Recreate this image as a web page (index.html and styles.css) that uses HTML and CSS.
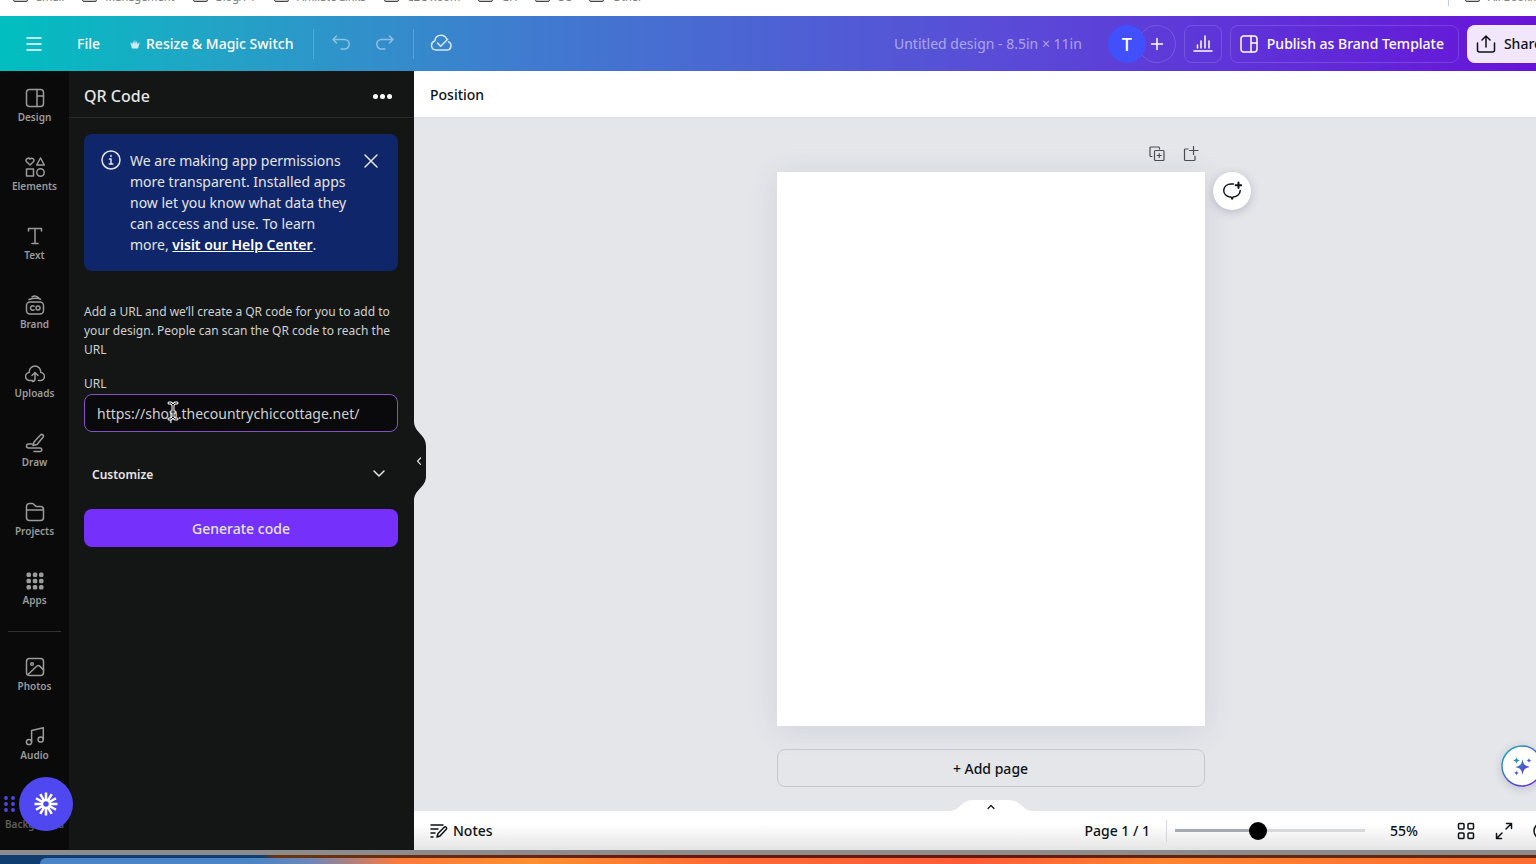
FILE: index.html
```html
<!DOCTYPE html>
<html lang="en">
<head>
  <meta charset="UTF-8" />
  <meta name="viewport" content="width=device-width, initial-scale=1.0"/>
  <title>Untitled design</title>
  <link rel="stylesheet" href="styles.css">
</head>
<body>
  <nav class="bookmarks">
    <a href="#"><i></i>Email</a>
    <a href="#"><i></i>Management</a>
    <a href="#"><i></i>Blog/PT</a>
    <a href="#"><i></i>Affiliate Links</a>
    <a href="#"><i></i>C2C Room</a>
    <a href="#"><i></i>GH</a>
    <a href="#"><i></i>SC</a>
    <a href="#"><i></i>Other</a>
    <a href="#" class="all-bookmarks"><i></i>All Bookmarks</a>
  </nav>

  <div class="app">
    <header class="topbar">
      <button class="icon-btn menu" aria-label="Menu">
        <svg width="16" height="16" viewBox="0 0 16 16"><path d="M1 2h14M1 8h14M1 14h14"/></svg>
      </button>
      <button class="text-btn">File</button>
      <button class="text-btn resize">
        <svg class="crown" width="10" height="10" viewBox="0 0 10 10"><path d="M2 9.500 .2 3.200 2.600 5 3 1.800 4.200 4.600 5 .5l.8 4.100L7 1.800 7.400 5l2.400-1.800L8 9.500z"/></svg>
        Resize &amp; Magic Switch
      </button>
      <span class="bar-line"></span>
      <div class="history">
        <button class="icon-btn dim" aria-label="Undo">
          <svg width="20" height="20" viewBox="0 0 20 20"><path d="M5.500 2 2 5.500 5.500 9M2 5.500h11.500a4.700 4.700 0 0 1 0 9.500H10"/></svg>
        </button>
        <button class="icon-btn dim" aria-label="Redo">
          <svg width="20" height="20" viewBox="0 0 20 20"><path d="M14.500 2 18 5.500 14.500 9M18 5.500H6.500a4.700 4.700 0 0 0 0 9.500H10"/></svg>
        </button>
      </div>
      <span class="bar-line"></span>
      <button class="icon-btn saved" aria-label="All changes saved">
        <svg width="22" height="20" viewBox="0 0 22 20"><path d="M6 16a4.600 4.600 0 0 1-1.200-9C5.300 3.500 8 1.300 11.100 1.300c2.400 0 4.500 1.300 5.500 3.400M6 16h10.500a4.300 4.300 0 0 0 2-8.200M7.500 9l3.200 3.200 7-7"/></svg>
      </button>

      <div class="topbar-right">
        <span class="doc-title">Untitled design - 8.5in × 11in</span>
        <div class="people">
          <span class="avatar">T</span>
          <button class="add-person" aria-label="Add people">
            <svg width="14" height="14" viewBox="0 0 14 14"><path d="M7 1.500v11M1.500 7h11"/></svg>
          </button>
        </div>
        <button class="outline-btn square" aria-label="Insights">
          <svg width="20" height="20" viewBox="0 0 20 20"><path d="M1 17h18M4.500 14v-3M8 14V7M12 14V2M16 14V7"/></svg>
        </button>
        <button class="outline-btn">
          <svg width="20" height="20" viewBox="0 0 20 20"><rect x="2" y="2" width="16" height="16" rx="3"/><path d="M12 2v16M12 9h6"/></svg>
          Publish as Brand Template
        </button>
        <button class="share-btn">
          <svg width="20" height="20" viewBox="0 0 20 20"><path d="M10 13V2M6 6l4-4 4 4M1.500 9v7a2 2 0 0 0 2 2h13a2 2 0 0 0 2-2V9"/></svg>
          Share
        </button>
      </div>
    </header>

    <div class="workspace">
      <nav class="rail">
        <a href="#"><svg viewBox="0 0 20 20"><rect x="1.500" y="1.500" width="17" height="17" rx="3"/><path d="M12 1.500v17M12 8h6.500"/></svg>Design</a>
        <a href="#"><svg viewBox="0 0 20 20"><path d="M5 8 1.400 4.500A2.100 2.100 0 0 1 5 2.200a2.100 2.100 0 0 1 3.600 2.300zM15.500 1l3.800 7h-7.600z"/><rect x="1.500" y="12" width="7" height="7"/><circle cx="15.500" cy="15.500" r="3.700"/></svg>Elements</a>
        <a href="#"><svg viewBox="0 0 20 20"><path d="M3.500 5V2.500h13V5M10 2.500v15M7 17.500h6"/></svg>Text</a>
        <a href="#"><svg viewBox="0 0 20 20"><rect x="1.500" y="7" width="17" height="12" rx="3.500"/><path d="M4 4.500c3-1 8-2 11.500-.4M7 1.800c2.500-1.300 5-1 7 1.500M9 11.200a2.200 2.200 0 1 0 0 3.600"/><circle cx="13" cy="13" r="2"/></svg>Brand</a>
        <a href="#"><svg viewBox="0 0 20 20"><path d="M7.500 16.500H5a4 4 0 0 1-.8-8C4 4.500 7 2 10 2s6 2.500 5.800 6.500a4 4 0 0 1-.8 8h-1.500M7 11.500l3-3 3 3M10 9v5.500c0 2-1 3-2.500 3"/></svg>Uploads</a>
        <a href="#"><svg viewBox="0 0 20 20"><path d="m9 9 6.500-7a1.600 1.600 0 0 1 2.500 2.200L12 11.500 8 12.500zM7 11H3.500a2 2 0 0 0 0 4H15a1.800 1.800 0 0 1 0 3.600H9"/></svg>Draw</a>
        <a href="#"><svg viewBox="0 0 20 20"><path d="M1.500 15.500v-11a3 3 0 0 1 3-3h2.700c2.200 0 2.300 3 4.300 3h4a3 3 0 0 1 3 3v8a3 3 0 0 1-3 3h-11a3 3 0 0 1-3-3M1.500 8h17"/></svg>Projects</a>
        <a href="#"><svg class="solid" viewBox="0 0 20 20"><rect x="1.500" y="1.500" width="4.500" height="4.500" rx="1.500"/><rect x="7.800" y="1.500" width="4.500" height="4.500" rx="1.500"/><rect x="14" y="1.500" width="4.500" height="4.500" rx="1.500"/><rect x="1.500" y="7.800" width="4.500" height="4.500" rx="1.500"/><rect x="7.800" y="7.800" width="4.500" height="4.500" rx="1.500"/><rect x="14" y="7.800" width="4.500" height="4.500" rx="1.500"/><rect x="1.500" y="14" width="4.500" height="4.500" rx="1.500"/><rect x="7.800" y="14" width="4.500" height="4.500" rx="1.500"/><rect x="14" y="14" width="4.500" height="4.500" rx="1.500"/></svg>Apps</a>
        <hr>
        <a href="#"><svg viewBox="0 0 20 20"><rect x="1.500" y="1.500" width="17" height="17" rx="3"/><circle cx="7" cy="7" r="1.300"/><path d="m3 17.500 9-8.500c1-1 2-.6 3 .4l3.500 3.500"/></svg>Photos</a>
        <a href="#"><svg viewBox="0 0 20 20"><circle cx="4" cy="16" r="2.600"/><circle cx="15.700" cy="13.500" r="2.600"/><path d="M6.600 16V4.500l11.700-2.800v11.800"/></svg>Audio</a>
        <a href="#" class="faded"><svg viewBox="0 0 20 20"></svg>Background</a>
      </nav>

      <section class="panel">
        <div class="panel-header">
          <h1>QR Code</h1>
          <button class="more" aria-label="More options"><i></i><i></i><i></i></button>
        </div>
        <div class="panel-body">
          <div class="notice">
            <svg width="20" height="20" viewBox="0 0 20 20"><circle cx="10" cy="10" r="9"/><path d="M8.500 9H10v5M8.300 14h3.500M10 5.500v1"/></svg>
            <p>We are making app permissions more transparent. Installed apps now let you know what data they can access and use. To learn more, <a href="#">visit our Help Center</a>.</p>
            <button class="close" aria-label="Close">
              <svg width="14" height="14" viewBox="0 0 14 14"><path d="m1 1 12 12M13 1 1 13"/></svg>
            </button>
          </div>
          <p class="intro">Add a URL and we’ll create a QR code for you to add to your design. People can scan the QR code to reach the URL</p>
          <label for="url">URL</label>
          <input type="text" id="url" value="https://shop.thecountrychiccottage.net/">
          <button class="customize">
            Customize
            <svg width="12" height="8" viewBox="0 0 12 8"><path d="m1 1 5 5 5-5"/></svg>
          </button>
          <button class="generate">Generate code</button>
          <svg class="cursor" width="12" height="20" viewBox="0 0 12 20"><path class="halo" d="M2 2h2l2 2 2-2h2M6 4v12M2 18h2l2-2 2 2h2M4 11h4"/><path d="M2 2h2l2 2 2-2h2M6 4v12M2 18h2l2-2 2 2h2M4 11h4"/></svg>
        </div>
        <button class="collapse" aria-label="Hide panel">
          <svg width="13" height="80" viewBox="0 0 13 80"><path class="shape" d="M0 0C0 12 12 13 12 25v30C12 67 0 68 0 80z"/><path d="m6.500 37-3 3.200 3 3.200"/></svg>
        </button>
      </section>

      <main class="editor">
        <div class="toolbar"><button>Position</button></div>
        <div class="canvas">
          <div class="sheet-wrap">
            <div class="sheet-tools">
              <button aria-label="Duplicate page">
                <svg width="16" height="16" viewBox="0 0 16 16"><path d="M3 10.500H2A1 1 0 0 1 1 9.500V2a1 1 0 0 1 1-1h7.500a1 1 0 0 1 1 1v1"/><rect x="5.500" y="4.500" width="9.500" height="10" rx="1"/><path d="M10.200 7.500v4M8.200 9.500h4"/></svg>
              </button>
              <button aria-label="Insert page">
                <svg width="16" height="16" viewBox="0 0 16 16"><path d="M5 3H2.500a1 1 0 0 0-1 1v9.500a1 1 0 0 0 1 1H11a1 1 0 0 0 1-1V10M10.500.5v8M6.500 4.500h8.500"/></svg>
              </button>
            </div>
            <div class="sheet"></div>
            <button class="comment" aria-label="Comment">
              <svg width="20" height="20" viewBox="0 0 20 20"><path d="M11.500 3H9a7.200 6.500 0 0 0-2.200 12.700l2.200.3 1 2 1.200-2a7.500 6.500 0 0 0 7-6.500"/><path class="plus" d="M16.500 1.500v5.500M13.700 4.200h5.600"/></svg>
            </button>
            <button class="add-page">+ Add page</button>
          </div>
          <button class="assistant" aria-label="Assistant">
            <svg width="42" height="42" viewBox="0 0 42 42">
              <defs><linearGradient id="magic" x1="0" y1="0" x2="1" y2="1"><stop offset=".1" stop-color="#20a4b8"/><stop offset=".55" stop-color="#4b58c8"/><stop offset="1" stop-color="#7a2be0"/></linearGradient></defs>
              <circle cx="21" cy="21" r="20"/>
              <path d="M21.500 14c1 5.500 2 6.800 7.500 8-5.500 1.200-6.500 2.500-7.500 8-1-5.500-2-6.800-7.500-8 5.500-1.200 6.500-2.500 7.500-8zM15.500 12c.5 2.200 1 2.800 3.500 3.500-2.500.6-3 1.100-3.500 3.500-.5-2.400-1-2.900-3.500-3.500 2.500-.7 3-1.300 3.500-3.500zM28 13c.4 1.600.9 2 2.500 2.500-1.600.4-2.100.9-2.500 2.500-.4-1.600-.9-2.100-2.500-2.500 1.600-.5 2.100-.9 2.500-2.500zM15.500 25.500c.4 1.600.9 2 2.500 2.500-1.600.4-2.100.9-2.500 2.500-.4-1.600-.9-2.100-2.500-2.500 1.600-.5 2.100-.9 2.500-2.500z"/>
            </svg>
          </button>
        </div>
        <footer class="statusbar">
          <button class="pages-tab" aria-label="Show pages">
            <svg width="84" height="13" viewBox="0 0 84 13"><path class="shape" d="M0 13v-1C11 12 12 1 24 1h36c12 0 13 11 24 11v1z"/><path d="m39 9.500 3-3 3 3"/></svg>
          </button>
          <button class="notes">
            <svg width="18" height="16" viewBox="0 0 18 16"><path d="M1 2h12M1 6h7M1 10h4M1 14h2M7 14l1-3.500L14.500 4a1.500 1.500 0 0 1 2 2L10 13z"/></svg>
            Notes
          </button>
          <div class="zoom">
            <span>Page 1 / 1</span>
            <span class="zoom-line"></span>
            <input type="range" min="0" max="100" value="43" aria-label="Zoom">
            <span class="percent">55%</span>
            <button aria-label="Grid view">
              <svg width="18" height="18" viewBox="0 0 18 18"><rect x="1.500" y="1.500" width="5.500" height="5.500" rx="1"/><rect x="11" y="1.500" width="5.500" height="5.500" rx="1"/><rect x="1.500" y="11" width="5.500" height="5.500" rx="1"/><rect x="11" y="11" width="5.500" height="5.500" rx="1"/></svg>
            </button>
            <button aria-label="Full screen">
              <svg width="18" height="18" viewBox="0 0 18 18"><path d="M11.500 1.500h5v5M16.500 1.500l-5.500 5.500M6.500 16.500h-5v-5M1.500 16.500 7 11"/></svg>
            </button>
            <button aria-label="Help">
              <svg width="18" height="18" viewBox="0 0 18 18"><circle cx="9" cy="9" r="8"/><path d="M7 7a2 2 0 1 1 2 2.500V11M9 13v.5"/></svg>
            </button>
          </div>
        </footer>
      </main>
    </div>
  </div>

  <div class="desktop"><div class="dock"></div></div>

  <div class="recorder">
    <svg class="grip" width="12" height="18" viewBox="0 0 12 18"><circle cx="2" cy="3" r="1.900"/><circle cx="9" cy="3" r="1.900"/><circle cx="2" cy="9" r="1.900"/><circle cx="9" cy="9" r="1.900"/><circle cx="2" cy="15" r="1.900"/><circle cx="9" cy="15" r="1.900"/></svg>
    <button aria-label="Recorder">
      <svg width="24" height="24" viewBox="-12 -12 24 24">
        <path d="M0-3.500V-11.500M1.750-3.030 5.750-9.960M3.030-1.750 9.960-5.750M3.500 0H11.500M3.030 1.750 9.960 5.750M1.750 3.030 5.750 9.960M0 3.500V11.500M-1.750 3.030-5.750 9.960M-3.030 1.750-9.960 5.750M-3.500 0H-11.500M-3.030-1.750-9.960-5.750M-1.750-3.030-5.750-9.960"/>
        <circle r="4"/>
      </svg>
    </button>
  </div>
</body>
</html>
```
FILE: styles.css
```css
* {
  box-sizing: border-box;
}

body {
  margin: 0;
  height: 100vh;
  display: flex;
  flex-direction: column;
  overflow: hidden;
  position: relative;
  background: #fff;
  color: #0d1216;
  font-family: "Noto Sans", sans-serif;
  font-size: 14px;
}

button {
  font: inherit;
  font-weight: 500;
  color: inherit;
  background: none;
  border: none;
  padding: 0;
  display: flex;
  align-items: center;
  justify-content: center;
  cursor: pointer;
}

svg {
  flex: none;
  fill: none;
  stroke: currentColor;
  stroke-width: 1.5;
  stroke-linecap: round;
  stroke-linejoin: round;
}

/* Bookmarks */
.bookmarks {
  flex: none;
  display: flex;
  align-items: flex-end;
  gap: 18px;
  height: 16px;
  padding: 0 0 10px 13px;
  overflow: hidden;
}

.bookmarks a {
  display: flex;
  align-items: flex-end;
  gap: 8px;
  font-size: 11px;
  line-height: 18px;
  color: #777;
  text-decoration: none;
  white-space: nowrap;
}

.bookmarks i {
  width: 15px;
  height: 12px;
  margin-bottom: 4px;
  border: 1px solid #444;
  border-radius: 2px;
  background: #ccc;
}

.bookmarks .all-bookmarks {
  margin-left: auto;
  margin-right: -26px;
  padding-left: 16px;
  border-left: 1px solid #c4c9e4;
}

/* The app window runs a little past the right edge of the screen */
.app {
  flex: 1;
  min-height: 0;
  width: calc(100% + 31px);
  display: flex;
  flex-direction: column;
}

/* Top bar */
.topbar {
  flex: none;
  display: flex;
  align-items: center;
  height: 55px;
  padding: 0 16px 0 24px;
  color: #fff;
  background: linear-gradient(90deg, #00bfc0 0%, #23a3c6 14%, #3f7ccf 33%, #5a4bd8 64%, #6224d8 88%, #6a10d8 100%);
  white-space: nowrap;
}

.icon-btn.menu {
  width: 20px;
  margin-right: 33px;
}

.text-btn.resize {
  margin-left: 30px;
  gap: 6px;
}

.crown {
  fill: #cdeaf5;
  stroke: none;
}

.bar-line {
  width: 1px;
  height: 30px;
  margin-left: 20px;
  background: rgba(255, 255, 255, 0.2);
}

.history {
  display: flex;
  gap: 24px;
  margin-left: 17px;
}

.history + .bar-line {
  margin-left: 18px;
}

.dim {
  opacity: 0.45;
}

.saved {
  margin-left: 16px;
  opacity: 0.8;
}

.topbar-right {
  display: flex;
  align-items: center;
  gap: 8px;
  margin-left: auto;
}

.doc-title {
  margin-right: 18px;
  color: rgba(255, 255, 255, 0.5);
}

.people {
  display: flex;
}

.avatar {
  width: 38px;
  height: 38px;
  line-height: 38px;
  border-radius: 50%;
  background: #4150fb;
  text-align: center;
  font-size: 18px;
  font-weight: 500;
  z-index: 1;
}

.add-person {
  width: 38px;
  height: 38px;
  margin-left: -8px;
  border: 1px solid rgba(255, 255, 255, 0.15);
  border-radius: 50%;
}

.outline-btn {
  height: 38px;
  gap: 8px;
  padding: 0 14px 0 8px;
  border: 1px solid rgba(255, 255, 255, 0.15);
  border-radius: 8px;
}

.outline-btn.square {
  width: 38px;
  padding: 0;
}

.share-btn {
  height: 38px;
  width: 84px;
  gap: 8px;
  border-radius: 8px;
  background: #f1e6fb;
  color: #0d1216;
}

.workspace {
  flex: 1;
  min-height: 0;
  display: flex;
}

/* Side rail */
.rail {
  flex: none;
  width: 69px;
  overflow: hidden;
  background: #0a0a0b;
}

.rail a {
  display: flex;
  flex-direction: column;
  align-items: center;
  gap: 1px;
  height: 69px;
  padding-top: 17px;
  font-size: 10px;
  line-height: 16px;
  font-weight: 600;
  color: #9a9b9b;
  text-decoration: none;
}

.rail svg {
  width: 20px;
  height: 20px;
}

.rail .solid {
  fill: currentColor;
  stroke: none;
}

.rail .faded {
  color: #5c5d5d;
}

.rail hr {
  margin: 8px;
  border: none;
  border-top: 1px solid #323333;
}

/* QR panel */
.panel {
  flex: none;
  position: relative;
  width: 345px;
  background: #141616;
  color: #e4e5e5;
}

.panel-header {
  display: flex;
  align-items: center;
  justify-content: space-between;
  height: 47px;
  padding: 4px 22px 0 15px;
  border-bottom: 1px solid #292b2b;
}

.panel-header h1 {
  margin: 0;
  font-size: 16px;
  font-weight: 500;
}

.more {
  gap: 2px;
}

.more i {
  width: 5px;
  height: 5px;
  border-radius: 50%;
  background: #fff;
}

.panel-body {
  position: relative;
  padding: 16px 16px 16px 15px;
}

.notice {
  display: flex;
  align-items: flex-start;
  gap: 9px;
  padding: 16px 20px 16px 17px;
  border-radius: 8px;
  background: #10266b;
}

.notice p {
  flex: 1;
  margin: 0;
  line-height: 21px;
}

.notice a {
  color: #fff;
  font-weight: 600;
}

.close {
  padding: 4px 0;
}

.intro {
  margin: 31px 0 15px;
  font-size: 12px;
  line-height: 19px;
  color: #cfd0d0;
}

.panel label {
  display: block;
  font-size: 12px;
  line-height: 20px;
  color: #cfd0d0;
}

.panel input {
  width: 100%;
  height: 38px;
  padding: 0 12px;
  border: 1px solid #8450c4;
  border-radius: 8px;
  outline: none;
  background: #0a0a0c;
  color: #cfd0d0;
  font: inherit;
}

.customize {
  width: 100%;
  height: 38px;
  margin: 23px 0 16px;
  padding: 0 13px 0 8px;
  justify-content: space-between;
  font-size: 12px;
  font-weight: 600;
}

.generate {
  width: 100%;
  height: 38px;
  border-radius: 8px;
  background: #7630fb;
}

/* Mouse pointer over the URL field */
.cursor {
  position: absolute;
  left: 98px;
  top: 283px;
  color: #111;
  stroke-width: 1;
}

.cursor .halo {
  stroke: #fff;
  stroke-width: 3;
}

.collapse {
  position: absolute;
  left: 100%;
  top: 50%;
  transform: translateY(-50%);
  z-index: 2;
}

.collapse .shape {
  fill: #141616;
  stroke: none;
}

/* Editor */
.editor {
  flex: 1;
  min-width: 0;
  display: flex;
  flex-direction: column;
}

.toolbar {
  flex: none;
  display: flex;
  align-items: center;
  height: 47px;
  padding-left: 16px;
  border-bottom: 1px solid #dcdde2;
}

.canvas {
  flex: 1;
  min-height: 0;
  display: flex;
  justify-content: center;
  position: relative;
  background: #e5e6ea;
}

.sheet-wrap {
  position: relative;
  width: 428px;
  display: flex;
  flex-direction: column;
  padding: 24px 0;
}

.sheet-tools {
  display: flex;
  justify-content: flex-end;
  gap: 18px;
  height: 30px;
  padding: 4px 6px 0 0;
  align-items: flex-start;
  color: #4b4d52;
}

.sheet-tools svg {
  stroke-width: 1.2;
}

.sheet {
  flex: 1;
  background: #fff;
  box-shadow: 0 4px 28px rgba(60, 70, 110, 0.12);
}

.comment {
  position: absolute;
  left: calc(100% + 8px);
  top: 54px;
  width: 38px;
  height: 38px;
  border-radius: 50%;
  background: #fff;
  box-shadow: 0 2px 10px rgba(40, 50, 90, 0.25);
}

.comment .plus {
  stroke-width: 2;
}

.add-page {
  flex: none;
  height: 38px;
  margin-top: 23px;
  border: 1px solid #c8c9ce;
  border-radius: 8px;
}

.assistant {
  position: absolute;
  right: 24px;
  bottom: 24px;
  border-radius: 50%;
  box-shadow: 0 2px 8px rgba(40, 50, 90, 0.2);
}

.assistant circle {
  fill: #fff;
  stroke: url(#magic);
}

.assistant path {
  fill: url(#magic);
  stroke: none;
}

/* Status bar */
.statusbar {
  flex: none;
  position: relative;
  display: flex;
  align-items: center;
  justify-content: space-between;
  height: 39px;
  padding: 0 16px;
  background: linear-gradient(#fff 35%, #e4e4e4);
}

.pages-tab {
  position: absolute;
  left: 50%;
  top: -12px;
  transform: translateX(-50%);
}

.pages-tab .shape {
  fill: #fff;
  stroke: none;
}

.pages-tab svg,
.collapse svg {
  stroke-width: 1.2;
}

.notes {
  gap: 5px;
}

.zoom {
  display: flex;
  align-items: center;
  font-weight: 500;
}

.zoom-line {
  width: 1px;
  height: 22px;
  margin: 0 8px 0 16px;
  background: #d6d7da;
}

.zoom input {
  appearance: none;
  width: 190px;
  height: 18px;
  margin: 0;
  background: linear-gradient(90deg, #a5abb3 43%, #d6d8db 43%) center / 100% 3px no-repeat;
}

.zoom input::-webkit-slider-thumb {
  appearance: none;
  width: 18px;
  height: 18px;
  border-radius: 50%;
  background: #000;
}

.percent {
  width: 78px;
  text-align: center;
}

.zoom button {
  margin-left: 20px;
}

.zoom .percent + button {
  margin-left: 14px;
}

/* Desktop strip under the window */
.desktop {
  flex: none;
  height: 14px;
  padding: 8px 0 0 40px;
  background:
    linear-gradient(#8c8c8c, #8c8c8c) top / 100% 5px no-repeat,
    linear-gradient(90deg, #103d70 17%, #693510 18%, #6b1505 45%, #6b1505 66%, #632608 80%);
}

.dock {
  height: 6px;
  border-top-left-radius: 12px;
  background: linear-gradient(90deg, #4a84c4 14%, #6c86b8 18%, #fb7a3c 24%, #fb8f30 33%, #fc6c34 45%, #fc5c38 62%, #fd8430 75%, #fc6c30);
}

/* Floating recorder bubble */
.recorder {
  position: absolute;
  left: 4px;
  bottom: 33px;
  display: flex;
  align-items: center;
  gap: 3px;
}

.recorder button {
  width: 54px;
  height: 54px;
  border-radius: 50%;
  background: #4f48f0;
  color: #fff;
}

.recorder button svg {
  stroke-width: 2.5;
  stroke-linecap: butt;
}

.grip {
  fill: #4f48f0;
  stroke: none;
}
```
